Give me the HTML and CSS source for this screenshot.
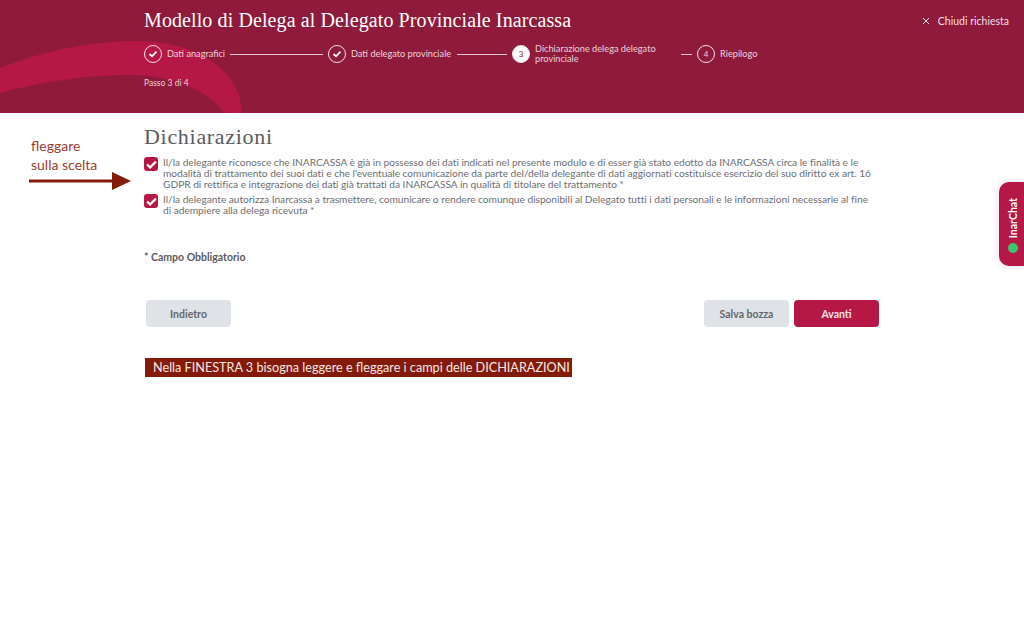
FILE: index.html
```html
<!DOCTYPE html>
<html lang="it">
<head>
    <meta charset="UTF-8">
    <title>Modello di Delega al Delegato Provinciale Inarcassa</title>
    <link rel="stylesheet" href="styles.css">
</head>
<body>
    <header class="top_band">
        <svg class="swoosh" width="242" height="113" viewBox="0 0 242 113">
            <path d="M0 68C45 50 95 41 135 41C195 41 241 68 242 113H225C205 88 170 75 130 75C85 75 40 82 0 93Z" fill="#b51746"/>
        </svg>
        <div class="top_inner">
            <div class="title_row">
                <h1>Modello di Delega al Delegato Provinciale Inarcassa</h1>
                <a class="close_link" href="#">
                    <svg width="8" height="8" viewBox="0 0 8 8"><path d="M1 1L7 7M7 1L1 7" stroke="#f3dfe5" stroke-width="1"/></svg>
                    Chiudi richiesta
                </a>
            </div>
            <ol class="steps">
                <li class="step step_one">
                    <span class="dot"><svg width="10" height="8" viewBox="0 0 10 8"><path d="M1.5 4L4 6.3L8.5 1.7" fill="none" stroke="#fff" stroke-width="1.8"/></svg></span>
                    <span class="step_label">Dati anagrafici</span>
                </li>
                <li class="step_line line_one"></li>
                <li class="step step_two">
                    <span class="dot"><svg width="10" height="8" viewBox="0 0 10 8"><path d="M1.5 4L4 6.3L8.5 1.7" fill="none" stroke="#fff" stroke-width="1.8"/></svg></span>
                    <span class="step_label">Dati delegato provinciale</span>
                </li>
                <li class="step_line line_two"></li>
                <li class="step step_three">
                    <span class="dot dot_active">3</span>
                    <span class="step_label">Dichiarazione delega delegato<br>provinciale</span>
                </li>
                <li class="step_line line_three"></li>
                <li class="step">
                    <span class="dot">4</span>
                    <span class="step_label">Riepilogo</span>
                </li>
            </ol>
            <p class="step_count">Passo 3 di 4</p>
        </div>
    </header>

    <main class="main_content">
        <h2>Dichiarazioni</h2>
        <div class="check_row">
            <span class="check"><svg width="11" height="9" viewBox="0 0 10 8"><path d="M1 4L3.8 6.6L9 1.4" fill="none" stroke="#fff" stroke-width="2"/></svg></span>
            <p>Il/la delegante riconosce che INARCASSA è già in possesso dei dati indicati nel presente modulo e di esser già stato edotto da INARCASSA circa le finalità e le<br>modalità di trattamento dei suoi dati e che l'eventuale comunicazione da parte del/della delegante di dati aggiornati costituisce esercizio del suo diritto ex art. 16<br>GDPR di rettifica e integrazione dei dati già trattati da INARCASSA in qualità di titolare del trattamento *</p>
        </div>
        <div class="check_row">
            <span class="check"><svg width="11" height="9" viewBox="0 0 10 8"><path d="M1 4L3.8 6.6L9 1.4" fill="none" stroke="#fff" stroke-width="2"/></svg></span>
            <p>Il/la delegante autorizza Inarcassa a trasmettere, comunicare o rendere comunque disponibili al Delegato tutti i dati personali e le informazioni necessarie al fine<br>di adempiere alla delega ricevuta *</p>
        </div>
        <p class="required">* Campo Obbligatorio</p>
        <div class="buttons">
            <button class="btn">Indietro</button>
            <div class="buttons_right">
                <button class="btn">Salva bozza</button>
                <button class="btn btn_primary">Avanti</button>
            </div>
        </div>
        <div class="note">Nella FINESTRA 3 bisogna leggere e fleggare i campi delle DICHIARAZIONI</div>
    </main>

    <!-- annotazione sopra la pagina -->
    <div class="hint">fleggare<br>sulla scelta</div>
    <svg class="hint_arrow" width="102" height="18" viewBox="0 0 102 18">
        <path d="M0 7.5H83V0L102 9L83 18V10.5H0Z" fill="#841a08"/>
    </svg>

    <div class="chat_tab">
        <span class="chat_text">InarChat</span>
        <span class="chat_dot"></span>
    </div>
</body>
</html>
```

FILE: styles.css
```css
body {
    font-family: 'Lato', sans-serif;
    margin: 0;
    padding: 0;
    background-color: #ffffff;
    color: #5f6368;
}

.top_band {
    position: relative;
    height: 113px;
    background-color: #8f1a3c;
    overflow: hidden;
}

.swoosh {
    position: absolute;
    left: 0;
    top: 0;
}

.top_inner {
    position: relative;
    padding: 10px 15px 0 144px;
    color: #ecd2da;
}

.title_row {
    display: flex;
    justify-content: space-between;
    align-items: center;
    height: 21px;
}

h1 {
    margin: 0;
    font-family: 'Liberation Serif', serif;
    font-size: 20px;
    font-weight: 400;
    letter-spacing: 0.1px;
    color: #ffffff;
}

.close_link {
    display: flex;
    align-items: center;
    gap: 8px;
    font-size: 10.5px;
    color: #f3dfe5;
    text-decoration: none;
}

.steps {
    display: flex;
    align-items: center;
    list-style: none;
    margin: 13px 0 0 0;
    padding: 0;
    height: 20px;
}

.step {
    display: flex;
    align-items: center;
    gap: 5px;
    font-size: 9.2px;
    line-height: 10px;
    white-space: nowrap;
}

.step_one { width: 80px; }
.step_two { width: 123px; }
.step_three { width: 143px; }

.step_line {
    height: 1px;
    background-color: #e9c9d2;
    margin: 0 5px;
}

.line_one { width: 93px; margin-left: 6px; }
.line_two { width: 50px; margin-left: 6px; }
.line_three { width: 11px; margin-left: 26px; }

.dot {
    box-sizing: border-box;
    flex: none;
    width: 18px;
    height: 18px;
    border: 1px solid #f3dfe5;
    border-radius: 50%;
    display: flex;
    align-items: center;
    justify-content: center;
    font-size: 8px;
}

.dot_active {
    background-color: #ffffff;
    color: #8f1a3c;
}

.step_count {
    margin: 14px 0 0 0;
    font-size: 8.5px;
}

.main_content {
    width: 735px;
    margin-left: 144px;
    padding-top: 12px;
}

h2 {
    margin: 0 0 8px 0;
    font-family: 'Liberation Serif', serif;
    font-size: 22px;
    line-height: 24px;
    font-weight: 400;
    letter-spacing: 0.7px;
    color: #5a5a5e;
}

.check_row {
    display: flex;
    gap: 5px;
    margin-bottom: 4px;
}

.check {
    flex: none;
    width: 14px;
    height: 14px;
    border-radius: 3px;
    background-color: #b51746;
    display: flex;
    align-items: center;
    justify-content: center;
}

.check_row p {
    margin: 0;
    width: 716px;
    font-size: 10.2px;
    letter-spacing: -0.03px;
    line-height: 11px;
    white-space: nowrap;
    color: #6c6f73;
}

.required {
    margin: 35px 0 0 0;
    font-size: 10.5px;
    font-weight: 700;
    color: #5a5a5e;
}

.buttons {
    display: flex;
    justify-content: space-between;
    margin-top: 37px;
    padding-left: 2px;
}

.buttons_right {
    display: flex;
    gap: 5px;
}

.btn {
    box-sizing: border-box;
    width: 85px;
    height: 27px;
    border: none;
    border-radius: 4px;
    background-color: #dfe2e7;
    font-family: 'Lato', sans-serif;
    font-size: 10.5px;
    font-weight: 700;
    color: #64676b;
}

.btn_primary {
    background-color: #b51746;
    color: #f8e4ea;
}

.note {
    width: 427px;
    height: 19px;
    line-height: 19px;
    margin: 31px 0 0 1px;
    padding-left: 8px;
    box-sizing: border-box;
    background-color: #841a08;
    color: #f5e9e5;
    font-size: 12.65px;
    white-space: nowrap;
}

.hint {
    position: absolute;
    left: 31px;
    top: 136px;
    font-size: 14px;
    line-height: 19px;
    color: #a23a2c;
}

.hint_arrow {
    position: absolute;
    left: 29px;
    top: 172px;
}

.chat_tab {
    position: absolute;
    right: 0;
    top: 182px;
    box-sizing: border-box;
    width: 25px;
    height: 84px;
    background-color: #b51746;
    border-radius: 10px 0 0 10px;
    box-shadow: 0 0 6px rgba(100, 100, 160, 0.25);
    display: flex;
    flex-direction: column;
    align-items: center;
    justify-content: flex-end;
    gap: 5px;
    padding: 0 0 13px 2px;
}

.chat_text {
    writing-mode: vertical-rl;
    transform: rotate(180deg);
    font-size: 10.5px;
    font-weight: 700;
    color: #ffffff;
}

.chat_dot {
    width: 10px;
    height: 10px;
    border-radius: 50%;
    background-color: #3ec46d;
}
```
